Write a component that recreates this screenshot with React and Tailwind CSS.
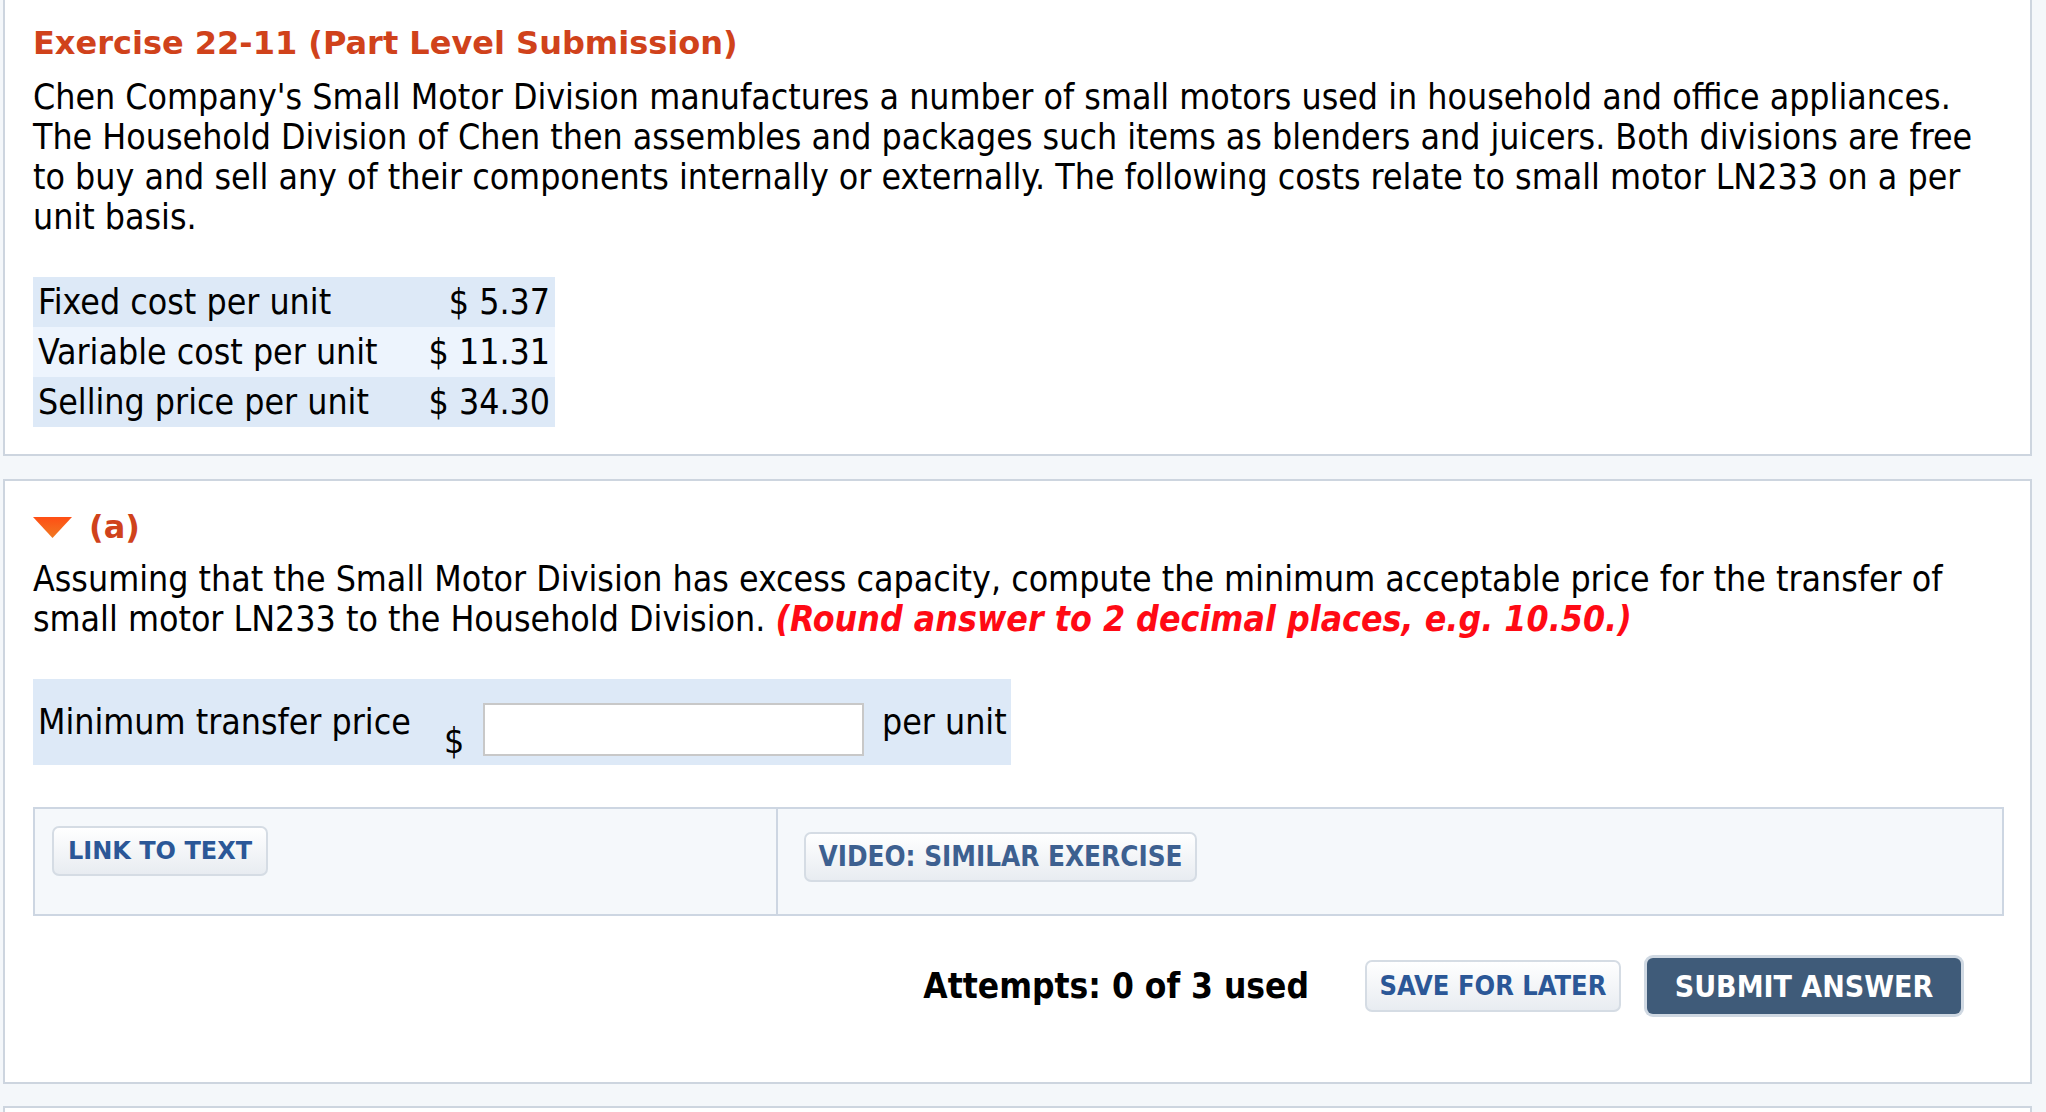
import React from "react";

const body = "font-[family-name:'DejaVu_Sans_Condensed','DejaVu_Sans',sans-serif]";
const wide = "font-[family-name:'DejaVu_Sans',sans-serif]";

function Triangle() {
  return (
    <svg width="39" height="21" viewBox="0 0 39 21" className="shrink-0">
      <defs>
        <linearGradient id="tri" x1="0" y1="0" x2="0" y2="1">
          <stop offset="0" stopColor="#ff4e14" />
          <stop offset="1" stopColor="#f07a22" />
        </linearGradient>
      </defs>
      <polygon points="0,0 39,0 19.5,21" fill="url(#tri)" />
    </svg>
  );
}

export default function App() {
  return (
    <div className={`min-h-screen w-full bg-[#f4f7fa] text-black ${body}`}>
      {/* Card 1 */}
      <div className="ml-[3px] w-[2029px] border-x-2 border-b-2 border-[#cdd5df] bg-white pl-[28px] pr-[26px] pt-[23px] pb-[27px]">
        <div className={`h-[40px] leading-[40px] text-[32px] font-bold text-[#d0421b] ${wide}`}>
          Exercise 22-11 (Part Level Submission)
        </div>
        <p className="mt-[14px] text-[35.4px] leading-[40px] whitespace-nowrap">
          Chen Company's Small Motor Division manufactures a number of small motors used in household and office appliances.<br />
          The Household Division of Chen then assembles and packages such items as blenders and juicers. Both divisions are free<br />
          to buy and sell any of their components internally or externally. The following costs relate to small motor LN233 on a per<br />
          unit basis.
        </p>
        <div className="mt-[40px] w-[522px] text-[35.4px] leading-[50px]">
          <div className="flex justify-between bg-[#dde9f7] px-[5px]">
            <span>Fixed cost per unit</span>
            <span>$ 5.37</span>
          </div>
          <div className="flex justify-between bg-[#edf4fd] px-[5px]">
            <span>Variable cost per unit</span>
            <span>$ 11.31</span>
          </div>
          <div className="flex justify-between bg-[#dde9f7] px-[5px]">
            <span>Selling price per unit</span>
            <span>$ 34.30</span>
          </div>
        </div>
      </div>

      {/* Card 2 */}
      <div className="mt-[23px] ml-[3px] w-[2029px] border-2 border-[#cdd5df] bg-white pl-[28px] pr-[26px] pt-[26px] pb-[66px]">
        <div className="flex h-[40px] items-center gap-[17px]">
          <Triangle />
          <span className={`text-[32px] font-bold text-[#d0421b] leading-[40px] ${wide}`}>(a)</span>
        </div>
        <p className="mt-[12px] text-[35.4px] leading-[40px] whitespace-nowrap">
          Assuming that the Small Motor Division has excess capacity, compute the minimum acceptable price for the transfer of<br />
          small motor LN233 to the Household Division.{" "}
          <span className="font-bold italic text-[#ff0a14]">(Round answer to 2 decimal places, e.g. 10.50.)</span>
        </p>

        <div className="mt-[40px] flex h-[86px] w-[978px] items-center bg-[#dde9f7] pl-[5px] text-[35.4px] leading-[40px]">
          <span className="w-[406px] whitespace-nowrap">Minimum transfer price</span>
          <span className="mt-[38px] w-[39px]">$</span>
          <div className="mt-[14px] h-[53px] w-[381px] border-2 border-[#c8c8c8] bg-white" />
          <span className="ml-[18px] whitespace-nowrap">per unit</span>
        </div>

        <div className="mt-[42px] flex h-[109px] border-2 border-[#cdd6e2] bg-[#f5f8fb]">
          <div className="w-[743px] border-r-2 border-[#cdd6e2] pl-[17px] pt-[17px]">
            <div className={`flex h-[50px] w-[216px] items-center justify-center rounded-[7px] border-2 border-[#d5dce4] bg-linear-to-b from-white to-[#e8ecf1] text-[24px] font-bold text-[#2b5797] ${wide}`}>
              LINK TO TEXT
            </div>
          </div>
          <div className="pl-[26px] pt-[23px]">
            <div className="flex h-[50px] w-[393px] items-center justify-center rounded-[7px] border-2 border-[#d5dce4] bg-linear-to-b from-white to-[#e8ecf1] text-[27.6px] font-bold text-[#3d6090] whitespace-nowrap">
              VIDEO: SIMILAR EXERCISE
            </div>
          </div>
        </div>

        <div className="mt-[40px] flex h-[60px] items-center justify-end pr-[43px]">
          <span className="text-[35px] font-bold whitespace-nowrap">Attempts: 0 of 3 used</span>
          <div className="ml-[56px] flex h-[52px] w-[256px] items-center justify-center rounded-[7px] border-2 border-[#d5dce4] bg-linear-to-b from-white to-[#e8ecf1] text-[27px] font-bold text-[#2b5797] whitespace-nowrap">
            SAVE FOR LATER
          </div>
          <div className="ml-[26px] flex h-[56px] w-[314px] items-center justify-center rounded-[6px] bg-[#3f5b79] text-[30px] font-bold text-white shadow-[0_0_0_3px_#cfd8e2] whitespace-nowrap">
            SUBMIT ANSWER
          </div>
        </div>
      </div>

      {/* Card 3 (partial) */}
      <div className="mt-[22px] ml-[3px] h-[40px] w-[2029px] border-x-2 border-t-2 border-[#cdd5df] bg-white" />
    </div>
  );
}
